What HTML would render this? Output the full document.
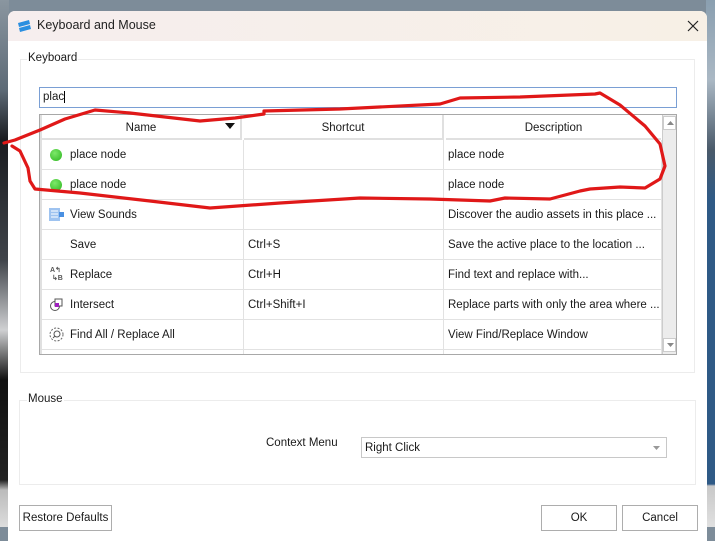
<!DOCTYPE html>
<html><head><meta charset="utf-8"><style>
*{box-sizing:border-box;margin:0;padding:0}
body{width:715px;height:527px;overflow:hidden;position:relative;font-family:"Liberation Sans",sans-serif;font-size:11.5px;color:#1a1a1a;background:#7d8c99}
.abs{position:absolute}
#bgl{left:0;top:0;width:9px;height:527px;background:linear-gradient(#8a96a0 0,#5d6a76 90px,#1a1c20 140px,#40444a 260px,#cfd0d2 330px,#111 380px,#222 480px,#bbb 490px,#ddd 527px)}
#bgr{left:706px;top:0;width:9px;height:527px;background:linear-gradient(#8a9fb0 0,#aab8c4 80px,#4a5a6a 150px,#2f5a86 200px,#2f5a86 484px,#c8c8c8 486px,#e0e0e0 527px)}
#dlg{left:8px;top:11px;width:699px;height:530px;background:#fff;border-radius:7px 7px 0 0;overflow:hidden}
#tb{left:0;top:0;width:699px;height:30px;background:linear-gradient(90deg,#f6eeee,#f7f0e6)}
.grp{border:1px solid #ececec}
.lbl{background:#fff;padding:0 1px}
.cell{position:absolute;border-right:1px solid #e2e2e2;border-bottom:1px solid #e2e2e2;height:30px;line-height:31px;padding-left:6px;white-space:nowrap;overflow:hidden}
.dot{position:absolute;left:8px;top:9px;width:12px;height:12px;border-radius:50%;background:radial-gradient(circle at 40% 35%,#7de86a,#2bb51d)}
.btn{position:absolute;border:1px solid #adadad;background:#fff;text-align:center;line-height:24px;height:26px}
</style></head><body>
<div id="bgl" class="abs"></div><div id="bgr" class="abs"></div>
<div id="dlg" class="abs">
 <div id="tb" class="abs">
  <svg class="abs" style="left:9px;top:8px" width="15" height="14" viewBox="0 0 15 14"><path d="M1 4 L12 1 L13 5 L2 8Z M2 9 L13 6 L14 10 L3 13Z" fill="#2a8fe0"/></svg>
  <div class="abs" style="left:29px;top:7px;font-size:12.5px;color:#222">Keyboard and Mouse</div>
  <svg class="abs" style="left:679px;top:9px" width="12" height="12"><path d="M1 1L11 11M11 1L1 11" stroke="#222" stroke-width="1.2"/></svg>
 </div>
 <div class="abs grp" style="left:12px;top:48px;width:675px;height:314px"></div>
 <div class="abs lbl" style="left:19px;top:41px">Keyboard</div>
 <div class="abs" style="left:31px;top:76px;width:638px;height:21px;border:1px solid #7a9fd4;padding-left:3px;line-height:19px">plac<span style="border-left:1px solid #000;margin-left:0px"> </span></div>
 <div class="abs" style="left:31px;top:103px;width:638px;height:241px;border:1px solid #a8a8a8;overflow:hidden">
  <div class="abs" style="left:2px;top:0;width:200px;height:25px;border-right:2px solid #e0e0e0;border-bottom:2px solid #e0e0e0;text-align:center;line-height:27px">Name</div>
  <svg class="abs" style="left:185px;top:8px" width="10" height="6"><path d="M0 0H10L5 6Z" fill="#111"/></svg>
  <div class="abs" style="left:204px;top:0;width:200px;height:25px;border-right:2px solid #e0e0e0;border-bottom:2px solid #e0e0e0;text-align:center;line-height:27px">Shortcut</div>
  <div class="abs" style="left:406px;top:0;width:215px;height:25px;border-bottom:2px solid #e0e0e0;text-align:center;line-height:27px">Description</div>
  <div class="abs" style="left:0;top:0;width:2px;height:241px;background:#e0e0e0"></div>
  <div class="abs" style="left:622px;top:0;width:15px;height:241px;background:#ececec;border-left:1px solid #ccc"></div>
  <div class="abs" style="left:623px;top:1px;width:13px;height:14px;background:#fff;border:1px solid #ccc"><svg style="position:absolute;left:3px;top:4px" width="7" height="4"><path d="M0 4H7L3.5 0Z" fill="#888"/></svg></div>
  <div class="abs" style="left:623px;top:223px;width:13px;height:14px;background:#fff;border:1px solid #ccc"><svg style="position:absolute;left:3px;top:4px" width="7" height="4"><path d="M0 0H7L3.5 4Z" fill="#888"/></svg></div>
  <div class="abs" style="left:2px;top:25px;width:620px">
   <div style="position:relative;height:30px"><div class="cell" style="left:0;width:202px;padding-left:28px">place node</div><span class="dot"></span><div class="cell" style="left:202px;width:200px"></div><div class="cell" style="left:402px;width:218px;padding-left:4px">place node</div></div>
   <div style="position:relative;height:30px"><div class="cell" style="left:0;width:202px;padding-left:28px">place node</div><span class="dot"></span><div class="cell" style="left:202px;width:200px"></div><div class="cell" style="left:402px;width:218px;padding-left:4px">place node</div></div>
   <div style="position:relative;height:30px"><div class="cell" style="left:0;width:202px;padding-left:28px">View Sounds</div><svg class="abs" style="left:6px;top:7px" width="18" height="16"><rect x="1" y="1" width="11" height="13" fill="#9ec3f0"/><path d="M3 4h7M3 7h7M3 10h7" stroke="#fff"/><rect x="11" y="5" width="5" height="5" fill="#4a90e2"/></svg><div class="cell" style="left:202px;width:200px"></div><div class="cell" style="left:402px;width:218px;padding-left:4px">Discover the audio assets in this place ...</div></div>
   <div style="position:relative;height:30px"><div class="cell" style="left:0;width:202px;padding-left:28px">Save</div><div class="cell" style="left:202px;width:200px;padding-left:4px">Ctrl+S</div><div class="cell" style="left:402px;width:218px;padding-left:4px">Save the active place to the location ...</div></div>
   <div style="position:relative;height:30px"><div class="cell" style="left:0;width:202px;padding-left:28px">Replace</div><div class="abs" style="left:8px;top:7px;font-size:7px;line-height:8px;color:#555;font-weight:bold">A↰<br>&nbsp;↳B</div><div class="cell" style="left:202px;width:200px;padding-left:4px">Ctrl+H</div><div class="cell" style="left:402px;width:218px;padding-left:4px">Find text and replace with...</div></div>
   <div style="position:relative;height:30px"><div class="cell" style="left:0;width:202px;padding-left:28px">Intersect</div><svg class="abs" style="left:7px;top:7px" width="15" height="15"><circle cx="6" cy="9" r="4.5" fill="none" stroke="#555"/><rect x="6" y="2" width="7" height="7" fill="#fff" stroke="#555"/><rect x="6" y="6" width="4" height="4" fill="#a020c0"/></svg><div class="cell" style="left:202px;width:200px;padding-left:4px">Ctrl+Shift+I</div><div class="cell" style="left:402px;width:218px;padding-left:4px">Replace parts with only the area where ...</div></div>
   <div style="position:relative;height:30px"><div class="cell" style="left:0;width:202px;padding-left:28px">Find All / Replace All</div><svg class="abs" style="left:7px;top:7px" width="15" height="15"><circle cx="7.5" cy="7.5" r="6.5" fill="none" stroke="#666" stroke-dasharray="2 1.5"/><circle cx="8" cy="7" r="3" fill="none" stroke="#555"/><path d="M6 9L4 11" stroke="#555"/></svg><div class="cell" style="left:202px;width:200px"></div><div class="cell" style="left:402px;width:218px;padding-left:4px">View Find/Replace Window</div></div>
   <div style="position:relative;height:30px"><div class="cell" style="left:0;width:202px"></div><div class="cell" style="left:202px;width:200px"></div><div class="cell" style="left:402px;width:218px"></div></div>
  </div>
 </div>
 <div class="abs grp" style="left:11px;top:389px;width:677px;height:85px"></div>
 <div class="abs lbl" style="left:19px;top:382px">Mouse</div>
 <div class="abs" style="left:258px;top:426px">Context Menu</div>
 <div class="abs" style="left:353px;top:426px;width:306px;height:21px;border:1px solid #c8c8c8;padding-left:3px;line-height:20px">Right Click<svg style="position:absolute;right:6px;top:8px" width="7" height="4"><path d="M0 0H7L3.5 4Z" fill="#999"/></svg></div>
 <div class="btn" style="left:11px;top:494px;width:93px">Restore Defaults</div>
 <div class="btn" style="left:533px;top:494px;width:76px">OK</div>
 <div class="btn" style="left:614px;top:494px;width:76px">Cancel</div>
</div>
<svg class="abs" style="left:0;top:0" width="715" height="527"><path d="M4 143 L15 140 L40 130 L65 119 L95 110 L130 113 L200 121 L235 118 L264 114 L264 111 L340 109 L440 104 L460 98 L520 97 L595 94 L600 93 L620 105 L645 126 L660 144 L665 166 L660 179 L645 188 L620 187 L590 189 L580 191 L550 199 L505 198 L490 201 L430 199 L360 198 L280 203 L210 208 L150 201 L80 193 L35 189 L30 181 L28 168 L20 151 L12 146" fill="none" stroke="#e01818" stroke-width="3.2" stroke-linejoin="round" stroke-linecap="round"/></svg>
</body></html>
